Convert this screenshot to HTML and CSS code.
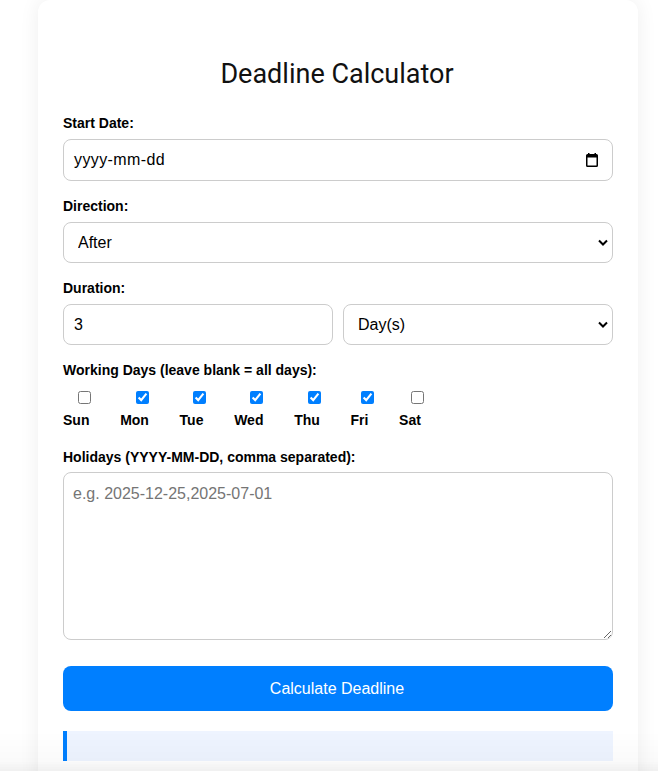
FILE: index.html
```html
<!DOCTYPE html>
<html lang="en">
<head>
    <meta charset="UTF-8">
    <meta name="viewport" content="width=device-width, initial-scale=1.0">
    <title>Deadline Calculator</title>
    <link rel="stylesheet" href="styles.css">
</head>
<body>

    <div class="container">
        <h2>Deadline Calculator</h2>

        <div class="form-group">
            <label>Start Date:</label>
            <div class="date-field">
                <span>yyyy-mm-dd</span>
                <svg class="date-icon" width="12" height="14" viewBox="0 0 12 14">
                    <path d="M2 0h1.500v1h5V0H10v1h.5A1.500 1.500 0 0 1 12 2.500v10a1.500 1.500 0 0 1-1.500 1.500h-9A1.500 1.500 0 0 1 0 12.500v-10A1.500 1.500 0 0 1 1.500 1H2z M1.500 4.500v8h9v-8z" fill="#000" fill-rule="evenodd"/>
                </svg>
            </div>
        </div>

        <div class="form-group">
            <label>Direction:</label>
            <select>
                <option>After</option>
                <option>Before</option>
            </select>
        </div>

        <div class="form-group">
            <label>Duration:</label>
            <div class="duration-row">
                <input type="number" value="3">
                <select>
                    <option>Day(s)</option>
                    <option>Week(s)</option>
                </select>
            </div>
        </div>

        <div class="form-group">
            <label>Working Days (leave blank = all days):</label>
            <div class="days">
                <label class="day"><input type="checkbox">Sun</label>
                <label class="day"><input type="checkbox" checked>Mon</label>
                <label class="day"><input type="checkbox" checked>Tue</label>
                <label class="day"><input type="checkbox" checked>Wed</label>
                <label class="day"><input type="checkbox" checked>Thu</label>
                <label class="day"><input type="checkbox" checked>Fri</label>
                <label class="day"><input type="checkbox">Sat</label>
            </div>
        </div>

        <div class="form-group">
            <label class="holidays-label">Holidays (YYYY-MM-DD, comma separated):</label>
            <textarea placeholder="e.g. 2025-12-25,2025-07-01"></textarea>
        </div>

        <button class="calc-btn">Calculate Deadline</button>

        <div class="result"></div>
    </div>

    <!-- Fade at the bottom edge of the window -->
    <div class="bottom-fade"></div>

</body>
</html>
```

FILE: styles.css
```css
* {
    box-sizing: border-box;
}

html, body {
    margin: 0;
    padding: 0;
    height: 771px;
    overflow: hidden;
    background-color: #fff;
    font-family: "Liberation Sans", Arial, sans-serif;
}

.container {
    width: 600px;
    margin-left: 38px;
    padding: 59px 25px 25px;
    background-color: #fff;
    border-radius: 12px;
    box-shadow: 0 0 20px rgba(0, 0, 0, 0.07);
}

h2 {
    margin: 0 0 25px;
    padding-right: 2px;
    font-family: Roboto, sans-serif;
    font-size: 27px;
    font-weight: 400;
    line-height: 30px;
    text-align: center;
    color: #111;
}

.form-group {
    margin-bottom: 16px;
}

.form-group > label {
    display: block;
    margin-bottom: 8px;
    padding-top: 1px;
    font-size: 14px;
    font-weight: bold;
    line-height: 16px;
    color: #000;
}

.form-group > .holidays-label {
    margin-bottom: 7px;
}

input[type="number"],
select,
textarea,
.date-field {
    width: 100%;
    border: 1px solid #ccc;
    border-radius: 8px;
    background-color: #fff;
    font-family: "Liberation Sans", Arial, sans-serif;
    font-size: 16px;
    color: #000;
}

.date-field {
    display: flex;
    justify-content: space-between;
    align-items: center;
    height: 42px;
    padding: 0 14px 0 10px;
    letter-spacing: 0.4px;
}

.date-icon {
    display: block;
}

select {
    height: 41px;
    padding: 0 14px;
    appearance: none;
    background-image: url("data:image/svg+xml,%3Csvg xmlns='http://www.w3.org/2000/svg' width='10' height='7' viewBox='0 0 10 7'%3E%3Cpath d='M1 1.500l4 4 4-4' fill='none' stroke='%23000' stroke-width='2'/%3E%3C/svg%3E");
    background-repeat: no-repeat;
    background-position: right 4px center;
}

input[type="number"] {
    height: 41px;
    padding: 0 10px;
    appearance: textfield;
}

.duration-row {
    display: grid;
    grid-template-columns: 1fr 1fr;
    gap: 10px;
}

.days {
    display: flex;
    gap: 30.7px;
    margin-top: 13px;
    margin-bottom: 20px;
}

.day {
    display: flex;
    flex-direction: column;
    align-items: center;
    gap: 8px;
    font-size: 14px;
    font-weight: bold;
    line-height: 16px;
}

.day input {
    width: 13px;
    height: 13px;
    margin: 0 -8px 0 8px;
    accent-color: #007fff;
}

textarea {
    display: block;
    height: 168px;
    padding: 12px 10px 10px 9px;
    resize: vertical;
}

textarea::placeholder {
    color: #757575;
}

.calc-btn {
    display: block;
    width: 100%;
    height: 45px;
    margin-top: 26px;
    padding: 0 2px 0 0;
    border: none;
    border-radius: 8px;
    background-color: #007fff;
    color: #fff;
    font-family: "Liberation Sans", Arial, sans-serif;
    font-size: 16px;
}

.result {
    height: 30px;
    margin-top: 20px;
    border-left: 4px solid #007fff;
    background-color: #eef4ff;
}

.bottom-fade {
    position: fixed;
    left: 0;
    right: 0;
    bottom: 0;
    height: 40px;
    background: linear-gradient(to bottom, rgba(0, 0, 0, 0), rgba(0, 0, 0, 0.02) 75%, rgba(0, 0, 0, 0.06));
    pointer-events: none;
}
```
